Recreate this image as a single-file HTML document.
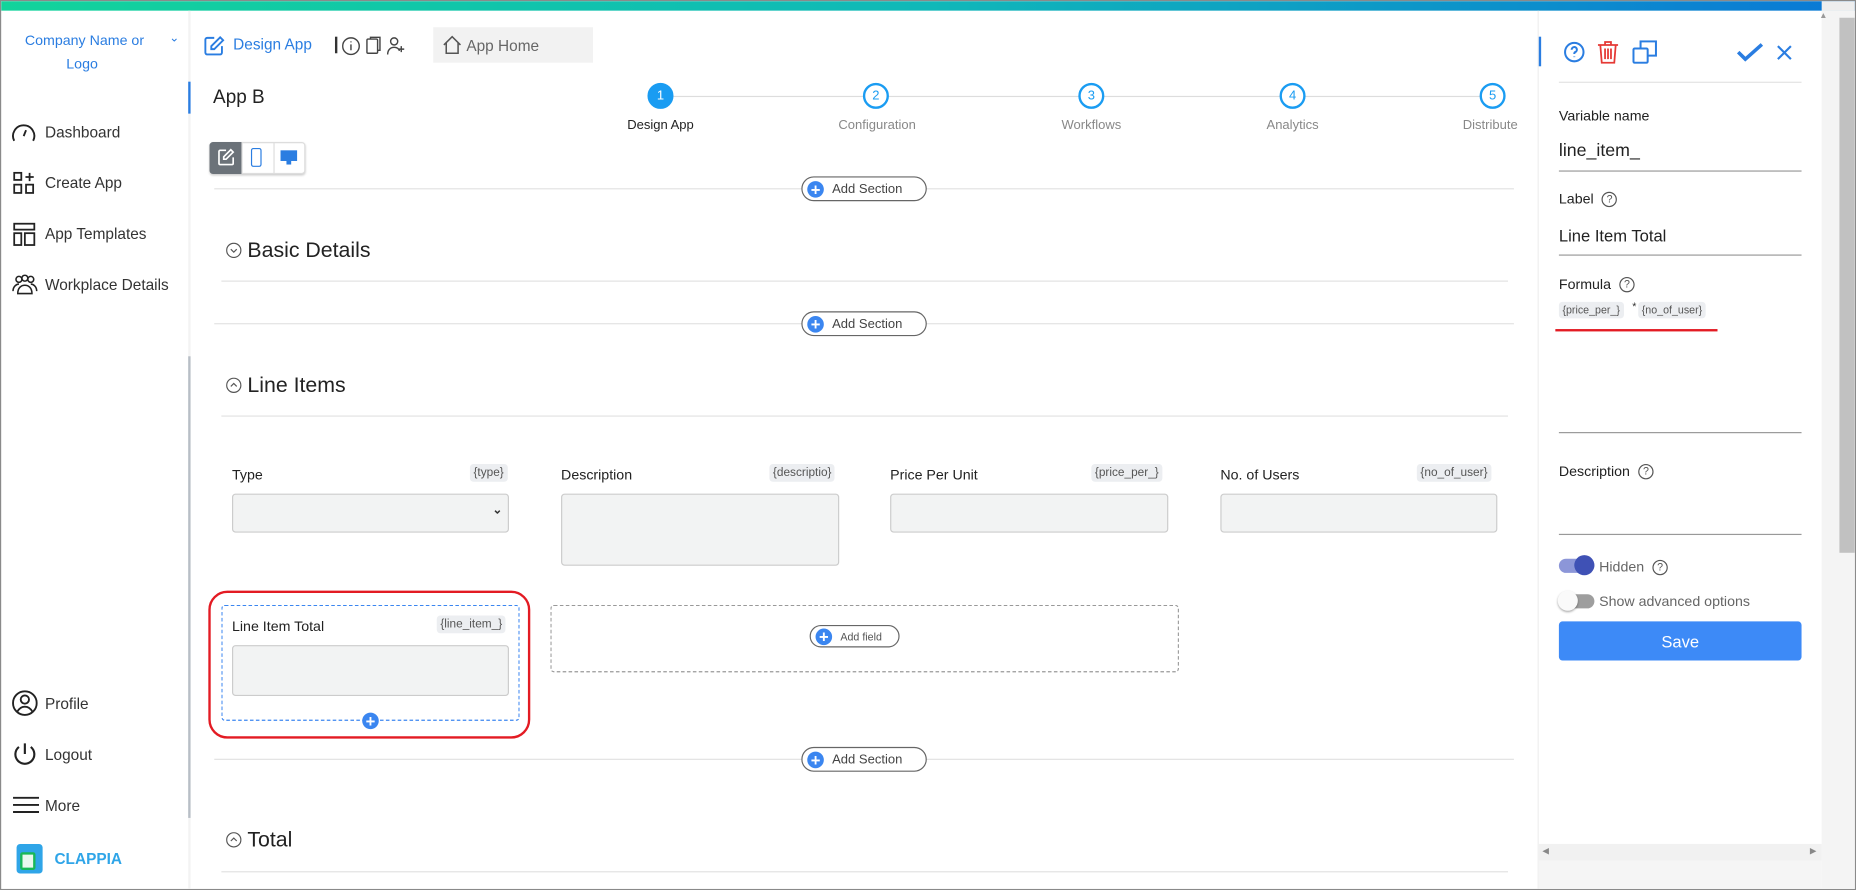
<!DOCTYPE html>
<html><head><meta charset="utf-8"><style>
*{box-sizing:border-box;margin:0;padding:0}
html,body{width:1856px;height:890px;overflow:hidden;background:#fff;font-family:"Liberation Sans",Arial,sans-serif}
#w{position:absolute;left:0;top:0;width:1568px;height:752px;transform:scale(1.18367);transform-origin:0 0;border:1px solid #8a8a8a;overflow:hidden;background:#fff}
.a{position:absolute}
.t{position:absolute;white-space:nowrap}
.line{position:absolute;height:1px;background:#e2e2e2}
.btn{position:absolute;height:21px;border:1px solid #666;border-radius:11px;background:#fff;font-size:11px;color:#444;display:flex;align-items:center;padding-left:4px}
.pc{width:14px;height:14px;border-radius:50%;background:#3b86f0;color:#fff;font-size:14px;font-weight:bold;display:inline-flex;align-items:center;justify-content:center;margin-right:7px;line-height:1}
.chip{position:absolute;background:#eceef1;border-radius:3px;font-size:10px;color:#555;padding:2px 3px}
.inp{position:absolute;background:#f2f3f3;border:1px solid #ccc;border-radius:3px}
.lbl{position:absolute;font-size:12px;color:#222}
.step{position:absolute;width:22px;height:22px;border-radius:50%;border:2px solid #1a9cf2;color:#1a9cf2;font-size:11px;display:flex;align-items:center;justify-content:center;background:#fff}
.sl{position:absolute;font-size:11px;color:#888;transform:translateX(-50%)}
.q{display:inline-block;width:13px;height:13px;border:1.3px solid #555;border-radius:50%;font-size:9px;text-align:center;line-height:11px;color:#555;vertical-align:middle;margin-left:7px}
.mi{position:absolute;left:37px;font-size:13px;color:#333}
</style></head><body><div id="w">
<div class="a" style="left:0;top:0;width:1568px;height:8px;background:linear-gradient(90deg,#12d39b,#10b8b8 50%,#0a78d6)"></div>
<div class="a" style="left:1538px;top:0;width:30px;height:8px;background:#eee"></div>

<!-- sidebar -->
<div class="a" style="left:158px;top:8px;width:2px;height:744px;background:#f3f3f3"></div>
<div class="a" style="left:158px;top:300px;width:2px;height:390px;background:#b8bec6"></div>
<div class="a" style="left:158px;top:68px;width:2px;height:27px;background:#2a7de1"></div>
<div class="t" style="left:20px;top:26px;font-size:12px;color:#2a7de1">Company Name or</div>
<div class="t" style="left:55px;top:46px;font-size:12px;color:#2a7de1">Logo</div>
<div class="t" style="left:142px;top:26px;font-size:10px;color:#2a7de1">&#8964;</div>
<svg class="a" style="left:8px;top:99px" width="22" height="22" viewBox="0 0 22 22" fill="none" stroke="#222" stroke-width="1.6"><path d="M3 19A9 9 0 1 1 19 19"/><path d="M11 15l2-5"/></svg>
<div class="mi" style="top:103px">Dashboard</div>
<svg class="a" style="left:10px;top:144px" width="20" height="20" viewBox="0 0 20 20" fill="none" stroke="#222" stroke-width="1.5"><rect x="1" y="1" width="6" height="6"/><rect x="1" y="11" width="6" height="7"/><rect x="11" y="11" width="6" height="7"/><path d="M14 1v7M10.5 4.5h7"/></svg>
<div class="mi" style="top:146px">Create App</div>
<svg class="a" style="left:10px;top:187px" width="20" height="20" viewBox="0 0 20 20" fill="none" stroke="#222" stroke-width="1.5"><rect x="1" y="1" width="17" height="5"/><rect x="1" y="9" width="6" height="10"/><rect x="10" y="9" width="8" height="10"/></svg>
<div class="mi" style="top:189px">App Templates</div>
<svg class="a" style="left:9px;top:231px" width="22" height="18" viewBox="0 0 22 18" fill="none" stroke="#222" stroke-width="1.3"><circle cx="6" cy="4" r="2.5"/><circle cx="11" cy="3" r="2.5"/><circle cx="16" cy="4" r="2.5"/><path d="M1 14c0-4 3-6 5-6M21 14c0-4-3-6-5-6M5 16c0-5 3-7 6-7s6 2 6 7z"/></svg>
<div class="mi" style="top:232px">Workplace Details</div>
<svg class="a" style="left:9px;top:582px" width="22" height="22" viewBox="0 0 22 22" fill="none" stroke="#222" stroke-width="1.6"><circle cx="11" cy="11" r="10"/><circle cx="11" cy="8" r="3.5"/><path d="M4.5 18.5c1.5-3 4-4.5 6.5-4.5s5 1.5 6.5 4.5"/></svg>
<div class="mi" style="top:586px">Profile</div>
<svg class="a" style="left:10px;top:626px" width="20" height="20" viewBox="0 0 20 20" fill="none" stroke="#222" stroke-width="1.8"><path d="M10 1v9"/><path d="M5 4a8 8 0 1 0 10 0"/></svg>
<div class="mi" style="top:629px">Logout</div>
<svg class="a" style="left:10px;top:671px" width="22" height="16" viewBox="0 0 22 16" stroke="#222" stroke-width="1.6"><path d="M0 2h22M0 8h22M0 14h22"/></svg>
<div class="mi" style="top:672px">More</div>
<div class="a" style="left:13px;top:712px;width:22px;height:25px;border-radius:3px;background:#2fa5e8"></div>
<div class="a" style="left:16px;top:719px;width:13px;height:15px;background:#e9f8ee;border:2px solid #18b857;border-radius:2px"></div>
<div class="t" style="left:45px;top:717px;font-size:13px;font-weight:bold;color:#2fa5e8">CLAPPIA</div>

<!-- header -->
<svg class="a" style="left:171px;top:29px" width="18" height="18" viewBox="0 0 18 18" fill="none" stroke="#2a7de1" stroke-width="1.6"><path d="M9 2H3a1.5 1.5 0 0 0-1.5 1.5v11A1.5 1.5 0 0 0 3 16h11a1.5 1.5 0 0 0 1.5-1.5V9"/><path d="M14 1.5l2.5 2.5L9 11.5H6.5V9z"/></svg>
<div class="t" style="left:196px;top:29px;font-size:13px;color:#2a7de1">Design App</div>
<div class="a" style="left:282px;top:30px;width:1.5px;height:14px;background:#333"></div>
<svg class="a" style="left:288px;top:29px" width="56" height="18" viewBox="0 0 56 18" fill="none" stroke="#444" stroke-width="1.2"><circle cx="7.5" cy="9" r="7"/><path d="M7.5 7.5v5M7.5 5v.8"/><rect x="21" y="3" width="9" height="12" rx="1"/><path d="M24 3V1.5h8v11h-2"/><circle cx="44" cy="5" r="3"/><path d="M38.5 16c0-4 2.5-6 5.5-6s4 1.5 4.5 3M50 9v5M47.5 11.5h5"/></svg>
<div class="a" style="left:365px;top:22px;width:135px;height:30px;background:#f2f2f2"></div>
<svg class="a" style="left:372px;top:28px" width="18" height="18" viewBox="0 0 18 18" fill="none" stroke="#555" stroke-width="1.3"><path d="M2 9L9 2l7 7M4 7v9h10V7"/></svg>
<div class="t" style="left:393px;top:30px;font-size:13px;color:#666">App Home</div>
<div class="t" style="left:179px;top:73px;font-size:16px;color:#222">App B</div>

<!-- stepper -->
<div class="line" style="left:568px;top:80px;width:700px;background:#ddd"></div>
<div class="step" style="left:546px;top:69px;background:#1a9cf2;color:#fff">1</div>
<div class="step" style="left:728px;top:69px">2</div>
<div class="step" style="left:910px;top:69px">3</div>
<div class="step" style="left:1080px;top:69px">4</div>
<div class="step" style="left:1249px;top:69px">5</div>
<div class="sl" style="left:557px;top:99px;color:#222">Design App</div>
<div class="sl" style="left:740px;top:99px">Configuration</div>
<div class="sl" style="left:921px;top:99px">Workflows</div>
<div class="sl" style="left:1091px;top:99px">Analytics</div>
<div class="sl" style="left:1258px;top:99px">Distribute</div>

<!-- toggle -->
<div class="a" style="left:176px;top:119px;width:81px;height:27px;border:1px solid #ddd;border-radius:3px;box-shadow:0 1px 2px rgba(0,0,0,.2);background:#fff"></div>
<div class="a" style="left:176px;top:119px;width:27px;height:27px;background:#6b7279;border-radius:3px 0 0 3px"></div>
<svg class="a" style="left:182px;top:124px" width="16" height="16" viewBox="0 0 16 16" fill="none" stroke="#fff" stroke-width="1.4"><path d="M8 2H3a1 1 0 0 0-1 1v10a1 1 0 0 0 1 1h10a1 1 0 0 0 1-1V8"/><path d="M12 1.5l2 2L8 9.5H6v-2z"/></svg>
<div class="a" style="left:203px;top:119px;width:1px;height:27px;background:#ddd"></div>
<div class="a" style="left:230px;top:119px;width:1px;height:27px;background:#ddd"></div>
<div class="a" style="left:211px;top:124px;width:9px;height:16px;border:1.5px solid #2a7de1;border-radius:2px"></div>
<div class="a" style="left:236px;top:126px;width:14px;height:9px;background:#2a7de1"></div>
<div class="a" style="left:241px;top:135px;width:4px;height:3px;background:#2a7de1"></div>

<!-- sections -->
<div class="line" style="left:180px;top:158px;width:1098px"></div>
<div class="btn" style="left:676px;top:148px;width:106px"><span class="pc">+</span>Add Section</div>
<svg class="a" style="left:190px;top:204px" width="13" height="13" viewBox="0 0 13 13" fill="none" stroke="#555"><circle cx="6.5" cy="6.5" r="6"/><path d="M4 5.5l2.5 2.5 2.5-2.5"/></svg>
<div class="t" style="left:208px;top:200px;font-size:18px;color:#222">Basic Details</div>
<div class="line" style="left:186px;top:236px;width:1087px"></div>
<div class="line" style="left:180px;top:272px;width:1098px"></div>
<div class="btn" style="left:676px;top:262px;width:106px"><span class="pc">+</span>Add Section</div>
<svg class="a" style="left:190px;top:318px" width="13" height="13" viewBox="0 0 13 13" fill="none" stroke="#555"><circle cx="6.5" cy="6.5" r="6"/><path d="M4 7.5l2.5-2.5 2.5 2.5"/></svg>
<div class="t" style="left:208px;top:314px;font-size:18px;color:#222">Line Items</div>
<div class="line" style="left:186px;top:350px;width:1087px"></div>

<div class="lbl" style="left:195px;top:393px">Type</div><div class="chip" style="left:396px;top:391px">{type}</div>
<div class="inp" style="left:195px;top:416px;width:234px;height:33px"></div>
<div class="t" style="left:415px;top:425px;font-size:10px;color:#333;font-weight:bold">&#8964;</div>
<div class="lbl" style="left:473px;top:393px">Description</div><div class="chip" style="left:649px;top:391px">{descriptio}</div>
<div class="inp" style="left:473px;top:416px;width:235px;height:61px"></div>
<div class="lbl" style="left:751px;top:393px">Price Per Unit</div><div class="chip" style="left:921px;top:391px">{price_per_}</div>
<div class="inp" style="left:751px;top:416px;width:235px;height:33px"></div>
<div class="lbl" style="left:1030px;top:393px">No. of Users</div><div class="chip" style="left:1196px;top:391px">{no_of_user}</div>
<div class="inp" style="left:1030px;top:416px;width:234px;height:33px"></div>

<div class="a" style="left:175px;top:498px;width:272px;height:125px;border:2px solid #e31b23;border-radius:16px"></div>
<div class="a" style="left:186px;top:510px;width:252px;height:98px;border:1px dashed #3b86f0;border-radius:3px"></div>
<div class="lbl" style="left:195px;top:521px">Line Item Total</div><div class="chip" style="left:368px;top:519px">{line_item_}</div>
<div class="inp" style="left:195px;top:544px;width:234px;height:43px"></div>
<div class="pc a" style="left:305px;top:601px;margin:0">+</div>
<div class="a" style="left:464px;top:510px;width:531px;height:57px;border:1px dashed #999;border-radius:3px"></div>
<div class="btn" style="left:683px;top:527px;width:76px;height:19px;font-size:9px;color:#555"><span class="pc">+</span>Add field</div>

<div class="line" style="left:180px;top:640px;width:1098px"></div>
<div class="btn" style="left:676px;top:630px;width:106px"><span class="pc">+</span>Add Section</div>
<svg class="a" style="left:190px;top:702px" width="13" height="13" viewBox="0 0 13 13" fill="none" stroke="#555"><circle cx="6.5" cy="6.5" r="6"/><path d="M4 7.5l2.5-2.5 2.5 2.5"/></svg>
<div class="t" style="left:208px;top:698px;font-size:18px;color:#222">Total</div>
<div class="line" style="left:186px;top:735px;width:1087px"></div>

<!-- right panel -->
<div class="a" style="left:1298px;top:8px;width:1px;height:744px;background:#eee"></div>
<div class="a" style="left:1299px;top:30px;width:2px;height:25px;background:#2a7de1"></div>
<svg class="a" style="left:1320px;top:34px" width="18" height="18" viewBox="0 0 18 18" fill="none" stroke="#2a7de1" stroke-width="1.7"><circle cx="9" cy="9" r="7.8"/><path d="M6.8 7a2.2 2.2 0 1 1 3 2c-.7.3-.8.8-.8 1.6M9 12.7v.6"/></svg>
<svg class="a" style="left:1348px;top:33px" width="19" height="20" viewBox="0 0 19 20" fill="none" stroke="#e53935" stroke-width="1.5"><path d="M1 4h17M7 4V1.5h5V4M3 4l1.2 15h10.6L16 4M7 7v9M9.5 7v9M12 7v9"/></svg>
<svg class="a" style="left:1378px;top:33px" width="21" height="20" viewBox="0 0 21 20" fill="none" stroke="#2a7de1" stroke-width="1.7"><rect x="1" y="7" width="12" height="12" rx="1"/><path d="M7 7V1h13v12h-7"/></svg>
<svg class="a" style="left:1466px;top:35px" width="23" height="16" viewBox="0 0 23 16" fill="none" stroke="#2a7de1" stroke-width="3"><path d="M1.5 8l6 6L21.5 1.5"/></svg>
<svg class="a" style="left:1500px;top:37px" width="13" height="13" viewBox="0 0 13 13" stroke="#2a7de1" stroke-width="1.8"><path d="M1 1l11 11M12 1L1 12"/></svg>
<div class="line" style="left:1316px;top:68px;width:205px"></div>
<div class="t" style="left:1316px;top:90px;font-size:12px;color:#222">Variable name</div>
<div class="t" style="left:1316px;top:118px;font-size:15px;color:#222">line_item_</div>
<div class="line" style="left:1316px;top:143px;width:205px;background:#999"></div>
<div class="t" style="left:1316px;top:160px;font-size:12px;color:#222">Label<span class="q">?</span></div>
<div class="t" style="left:1316px;top:190px;font-size:14px;color:#222">Line Item Total</div>
<div class="line" style="left:1316px;top:214px;width:205px;background:#999"></div>
<div class="t" style="left:1316px;top:232px;font-size:12px;color:#222">Formula<span class="q">?</span></div>
<div class="chip" style="left:1316px;top:254px;font-size:9px">{price_per_}</div>
<div class="t" style="left:1378px;top:253px;font-size:9px;color:#333">*</div>
<div class="chip" style="left:1383px;top:254px;font-size:9px">{no_of_user}</div>
<div class="a" style="left:1313px;top:277px;width:137px;height:2px;background:#e31b23"></div>
<div class="line" style="left:1316px;top:364px;width:205px;background:#999"></div>
<div class="t" style="left:1316px;top:390px;font-size:12px;color:#222">Description<span class="q">?</span></div>
<div class="line" style="left:1316px;top:450px;width:205px;background:#999"></div>
<div class="a" style="left:1316px;top:471px;width:30px;height:12px;border-radius:6px;background:#8c96d8"></div>
<div class="a" style="left:1329px;top:468px;width:17px;height:17px;border-radius:50%;background:#3f51b5"></div>
<div class="t" style="left:1350px;top:471px;font-size:12px;color:#666">Hidden<span class="q">?</span></div>
<div class="a" style="left:1316px;top:501px;width:30px;height:12px;border-radius:6px;background:#9e9e9e"></div>
<div class="a" style="left:1315px;top:498px;width:17px;height:17px;border-radius:50%;background:#fafafa;box-shadow:0 1px 2px rgba(0,0,0,.35)"></div>
<div class="t" style="left:1350px;top:500px;font-size:12px;color:#666">Show advanced options</div>
<div class="a" style="left:1316px;top:524px;width:205px;height:33px;background:#3d8af7;border-radius:3px;color:#fff;font-size:14px;display:flex;align-items:center;justify-content:center">Save</div>

<!-- scrollbars -->
<div class="a" style="left:1538px;top:8px;width:30px;height:744px;background:#f4f4f4"></div>
<div class="a" style="left:1553px;top:14px;width:13px;height:452px;background:#c1c1c1"></div>
<div class="t" style="left:1536px;top:9px;font-size:7px;color:#999">&#9650;</div>
<div class="a" style="left:1299px;top:712px;width:239px;height:14px;background:#f1f1f1"></div>
<div class="t" style="left:1302px;top:714px;font-size:7px;color:#888">&#9664;</div>
<div class="t" style="left:1528px;top:714px;font-size:7px;color:#888">&#9654;</div>
<div class="a" style="left:1299px;top:726px;width:239px;height:26px;background:#f5f5f5"></div>
</div></body></html>
